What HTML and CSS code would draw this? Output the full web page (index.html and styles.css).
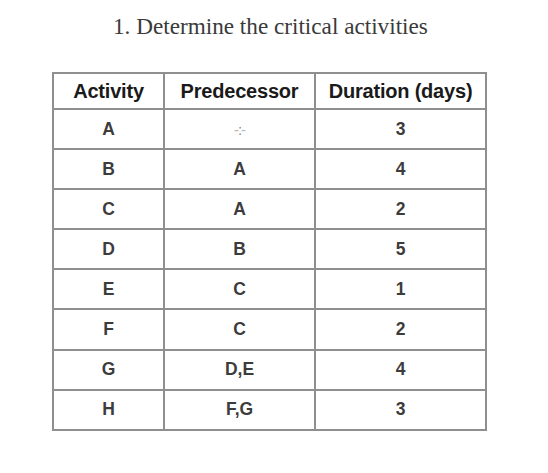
FILE: index.html
```html
<!DOCTYPE html>
<html>
<head>
<meta charset="utf-8">
<link rel="stylesheet" href="styles.css">
</head>
<body>
<div class="page">
  <h1 class="title">1. Determine the critical activities</h1>
  <table class="grid">
    <colgroup>
      <col class="c1"><col class="c2"><col class="c3">
    </colgroup>
    <thead>
      <tr><th>Activity</th><th>Predecessor</th><th>Duration (days)</th></tr>
    </thead>
    <tbody>
      <tr><td>A</td><td><span class="dash">-<span class="dot">:</span>-</span></td><td>3</td></tr>
      <tr><td>B</td><td>A</td><td>4</td></tr>
      <tr><td>C</td><td>A</td><td>2</td></tr>
      <tr><td>D</td><td>B</td><td>5</td></tr>
      <tr><td>E</td><td>C</td><td>1</td></tr>
      <tr><td>F</td><td>C</td><td>2</td></tr>
      <tr><td>G</td><td>D,E</td><td>4</td></tr>
      <tr><td>H</td><td>F,G</td><td>3</td></tr>
    </tbody>
  </table>
</div>
</body>
</html>
```
FILE: styles.css
```css
html, body {
  margin: 0;
  padding: 0;
  background: #ffffff;
}
.page {
  padding: 14px 0 0 52px;
}
.title {
  margin: 0 0 33px 61px;
  font-family: "Liberation Serif", "DejaVu Serif", serif;
  font-weight: normal;
  font-size: 23.2px;
  line-height: 25px;
  color: #3a3a3a;
}
.grid {
  border-collapse: collapse;
  table-layout: fixed;
  width: 433px;
  font-family: "Liberation Sans", Arial, sans-serif;
  font-weight: bold;
}
.c1 { width: 111px; }
.c2 { width: 151px; }
.c3 { width: 171px; }
.grid th, .grid td {
  border: 2px solid #8f8f8f;
  text-align: center;
  padding: 0;
}
.grid th {
  height: 34px;
  font-size: 20px;
  color: #1a1a1a;
  letter-spacing: -0.2px;
}
.grid td {
  height: 38.1px;
  font-size: 17.5px;
  color: #3c3c3c;
}
.dash {
  font-weight: normal;
  color: #b5b5b5;
  font-size: 15px;
  letter-spacing: -1px;
}
.dot {
  color: #8a8a8a;
}
```
